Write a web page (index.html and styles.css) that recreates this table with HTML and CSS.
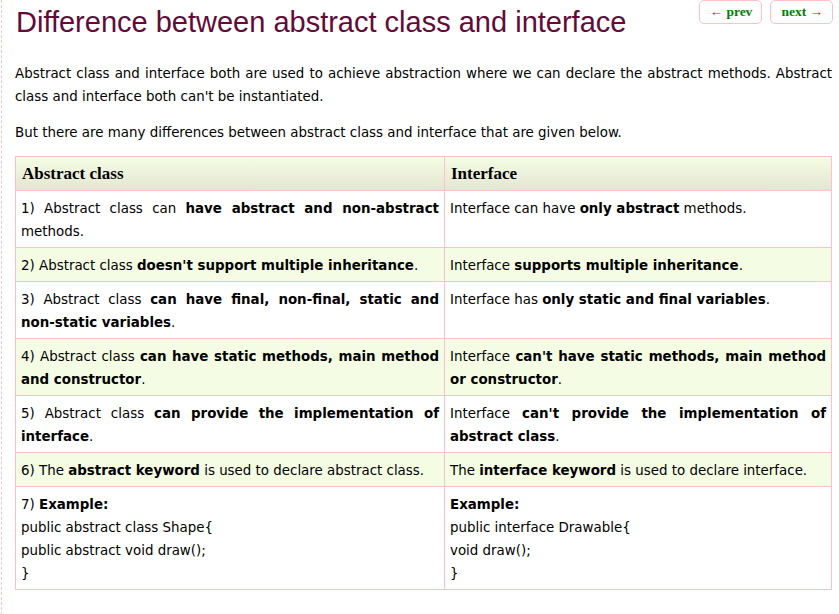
FILE: index.html
```html
<!DOCTYPE html>
<html>
<head>
<meta charset="utf-8">
<link rel="stylesheet" href="styles.css">
</head>
<body>
<div class="page">
  <div class="top">
    <h1 class="title">Difference between abstract class and interface</h1>
    <div class="nav">
      <a class="navbtn">&larr; prev</a>
      <a class="navbtn">next &rarr;</a>
    </div>
  </div>
  <p class="para">Abstract class and interface both are used to achieve abstraction where we can declare the abstract methods. Abstract class and interface both can't be instantiated.</p>
  <p class="para">But there are many differences between abstract class and interface that are given below.</p>
  <table class="cmp">
    <tr class="head"><th class="c1">Abstract class</th><th>Interface</th></tr>
    <tr><td class="c1">1) Abstract class can <b>have abstract and non-abstract</b> methods.</td><td>Interface can have <b>only abstract</b> methods.</td></tr>
    <tr class="alt"><td class="c1">2) Abstract class <b>doesn't support multiple inheritance</b>.</td><td>Interface <b>supports multiple inheritance</b>.</td></tr>
    <tr><td class="c1">3) Abstract class <b>can have final, non-final, static and non&#8209;static variables</b>.</td><td>Interface has <b>only static and final variables</b>.</td></tr>
    <tr class="alt"><td class="c1">4) Abstract class <b>can have static methods, main method and constructor</b>.</td><td>Interface <b>can't have static methods, main method or constructor</b>.</td></tr>
    <tr><td class="c1">5) Abstract class <b>can provide the implementation of interface</b>.</td><td>Interface <b>can't provide the implementation of abstract class</b>.</td></tr>
    <tr class="alt"><td class="c1">6) The <b>abstract keyword</b> is used to declare abstract class.</td><td>The <b>interface keyword</b> is used to declare interface.</td></tr>
    <tr><td class="c1">7) <b>Example:</b><br>public abstract class Shape{<br>public abstract void draw();<br>}</td><td><b>Example:</b><br>public interface Drawable{<br>void draw();<br>}</td></tr>
  </table>
</div>
</body>
</html>
```
FILE: styles.css
```css
html, body {
  margin: 0;
  padding: 0;
  background: #fff;
}
.page {
  margin-left: 1px;
  border-left: 1px dashed #f2c6cf;
  padding: 0 7px 20px 13px;
  min-height: 600px;
  font-family: "DejaVu Sans", Verdana, sans-serif;
  font-size: 13.4px;
  color: #000;
}
.top {
  display: flex;
  justify-content: space-between;
  align-items: flex-start;
}
.title {
  margin: 6px 0 0 1px;
  font-family: "Liberation Sans", Arial, sans-serif;
  font-weight: normal;
  font-size: 29px;
  line-height: 32px;
  color: #610b38;
}
.nav {
  display: flex;
  gap: 8px;
  margin-right: -1px;
}
.navbtn {
  display: block;
  border: 1px solid #ffc0cb;
  border-radius: 5px;
  padding: 3px 9px 3px 10px;
  font-family: "Liberation Serif", "Times New Roman", serif;
  font-weight: bold;
  font-size: 13.5px;
  line-height: 16px;
  color: #008000;
  text-decoration: none;
}
.para {
  margin: 24px 0 0 0;
  line-height: 23px;
  text-align: justify;
}
.para + .para {
  margin-top: 13px;
}
.cmp {
  margin-top: 12px;
  width: 817px;
  border-collapse: collapse;
  border: 1px solid #ffc0cb;
}
.cmp th, .cmp td {
  border: 1px solid #ffc0cb;
  padding: 6px 5px 4px 5px;
  vertical-align: top;
  line-height: 23px;
  text-align: justify;
}
.cmp .c1 {
  width: 417px;
}
.cmp th {
  font-family: "Liberation Serif", "Times New Roman", serif;
  font-size: 17px;
  font-weight: bold;
  text-align: left;
  padding: 5px 5px 5px 6px;
}
.head {
  background: linear-gradient(#f4fde2, #e4e5d3);
}
.alt {
  background: #f4fde3;
}
```
